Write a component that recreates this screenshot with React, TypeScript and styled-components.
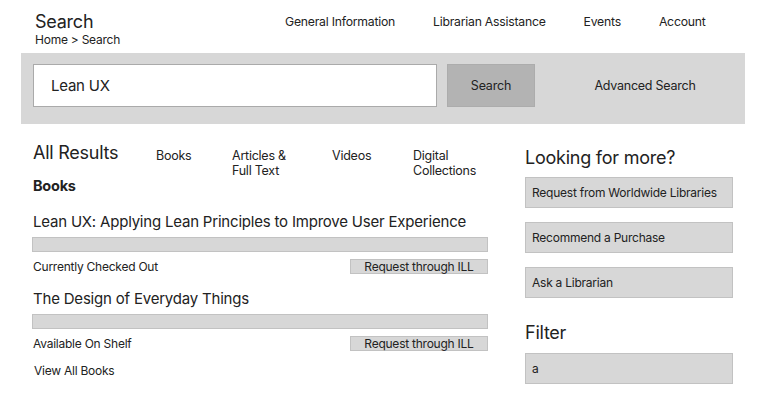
import React from "react";
import styled, { createGlobalStyle } from "styled-components";

const FONT = `Inter, "Liberation Sans", Arial, sans-serif`;

const GlobalStyle = createGlobalStyle`
  body {
    margin: 0;
    background: #ffffff;
    font-family: ${FONT};
    color: #222222;
    letter-spacing: -0.015em;
  }
`;

const NAV_ITEMS = ["General Information", "Librarian Assistance", "Events", "Account"];

const TABS = [
  { label: "Books", width: 76 },
  { label: "Articles &\nFull Text", width: 100 },
  { label: "Videos", width: 81 },
  { label: "Digital\nCollections", width: 75 },
];

const BOOKS = [
  { title: "Lean UX: Applying Lean Principles to Improve User Experience", status: "Currently Checked Out" },
  { title: "The Design of Everyday Things", status: "Available On Shelf" },
];

const HELP_LINKS = ["Request from Worldwide Libraries", "Recommend a Purchase", "Ask a Librarian"];

function App() {
  return (
    <Page>
      <GlobalStyle />
      <Header>
        <TitleBlock>
          <PageTitle>Search</PageTitle>
          <Breadcrumb>Home &gt; Search</Breadcrumb>
        </TitleBlock>
        <Nav>
          {NAV_ITEMS.map((item) => (
            <NavLink key={item}>{item}</NavLink>
          ))}
        </Nav>
      </Header>

      <SearchBand>
        <SearchInput defaultValue="Lean UX" />
        <SearchButton>Search</SearchButton>
        <AdvancedLink>Advanced Search</AdvancedLink>
      </SearchBand>

      <Main>
        <Results>
          <TabsRow>
            <AllResults>All Results</AllResults>
            {TABS.map((tab) => (
              <Tab key={tab.label} $width={tab.width}>
                {tab.label}
              </Tab>
            ))}
          </TabsRow>
          <SectionTitle>Books</SectionTitle>
          {BOOKS.map((book, i) => (
            <BookItem key={book.title} $first={i === 0}>
              <BookTitle>{book.title}</BookTitle>
              <Bar />
              <StatusRow>
                <Status>{book.status}</Status>
                <IllButton>Request through ILL</IllButton>
              </StatusRow>
            </BookItem>
          ))}
          <ViewAll>View All Books</ViewAll>
        </Results>

        <Sidebar>
          <SideHeading $top={23} $bottom={8}>
            Looking for more?
          </SideHeading>
          <LinkList>
            {HELP_LINKS.map((link) => (
              <SideBox key={link}>{link}</SideBox>
            ))}
          </LinkList>
          <SideHeading $top={24} $bottom={9}>
            Filter
          </SideHeading>
          <SideBox>a</SideBox>
        </Sidebar>
      </Main>
    </Page>
  );
}

export default App;

const Page = styled.div`
  width: 768px;
  height: 393px;
  overflow: hidden;
`;

const Header = styled.header`
  display: flex;
  align-items: flex-start;
  padding: 11px 0 0 35px;
  height: 42px;
`;

const TitleBlock = styled.div`
  display: flex;
  flex-direction: column;
  width: 250px;
`;

const PageTitle = styled.div`
  font-size: 18px;
  line-height: 22px;
`;

const Breadcrumb = styled.div`
  font-size: 12px;
  line-height: 14px;
`;

const Nav = styled.nav`
  display: flex;
  gap: 38px;
  padding-top: 3px;
`;

const NavLink = styled.a`
  font-size: 12.25px;
  line-height: 16px;
`;

const SearchBand = styled.div`
  display: flex;
  align-items: flex-start;
  margin-left: 21px;
  width: 724px;
  height: 71px;
  padding: 11px 12px 0;
  box-sizing: border-box;
  background: #d7d7d7;
`;

const SearchInput = styled.input`
  width: 404px;
  height: 43px;
  box-sizing: border-box;
  border: 1px solid #aaaaaa;
  background: #ffffff;
  padding: 0 17px;
  font-family: ${FONT};
  font-size: 15px;
  letter-spacing: -0.015em;
  color: #222222;
  outline: none;
`;

const SearchButton = styled.button`
  width: 88px;
  height: 43px;
  margin-left: 10px;
  border: 1px solid #acacac;
  background: #b3b3b3;
  font-family: ${FONT};
  font-size: 12.5px;
  letter-spacing: -0.015em;
  color: #222222;
`;

const AdvancedLink = styled.a`
  flex: 1;
  height: 43px;
  display: flex;
  align-items: center;
  justify-content: center;
  font-size: 12.5px;
  padding-left: 22px;
`;

const Main = styled.main`
  display: flex;
  gap: 37px;
  padding: 0 0 0 32px;
`;

const Results = styled.section`
  width: 456px;
  flex-shrink: 0;
  display: flex;
  flex-direction: column;
`;

const TabsRow = styled.div`
  display: flex;
  align-items: flex-start;
  padding-top: 19px;
`;

const AllResults = styled.div`
  flex-shrink: 0;
  width: 123px;
  padding-left: 1px;
  font-size: 18px;
  line-height: 20px;
`;

const Tab = styled.div<{ $width: number }>`
  flex-shrink: 0;
  width: ${(p) => p.$width}px;
  font-size: 12.5px;
  line-height: 15px;
  white-space: pre-line;
  padding-top: 5px;
`;

const SectionTitle = styled.div`
  font-size: 14.5px;
  font-weight: 700;
  line-height: 18px;
  margin-top: -1px;
  padding-left: 1px;
`;

const BookItem = styled.div<{ $first: boolean }>`
  display: flex;
  flex-direction: column;
  margin-top: ${(p) => (p.$first ? 18 : 16)}px;
`;

const BookTitle = styled.div`
  font-size: 15px;
  line-height: 18px;
  padding-left: 1px;
  letter-spacing: -0.2px;
`;

const Bar = styled.div`
  height: 15px;
  margin-top: 6px;
  box-sizing: border-box;
  border: 1px solid #c2c2c2;
  background: #d7d7d7;
`;

const StatusRow = styled.div`
  display: flex;
  justify-content: space-between;
  align-items: center;
  margin-top: 7px;
`;

const Status = styled.div`
  font-size: 12px;
  line-height: 14px;
  padding-left: 1px;
`;

const IllButton = styled.div`
  width: 138px;
  height: 15px;
  box-sizing: border-box;
  border: 1px solid #c2c2c2;
  background: #d7d7d7;
  font-size: 12px;
  line-height: 13px;
  text-align: center;
`;

const ViewAll = styled.a`
  font-size: 12px;
  line-height: 14px;
  margin-top: 13px;
  padding-left: 2px;
`;

const Sidebar = styled.aside`
  width: 208px;
  display: flex;
  flex-direction: column;
`;

const SideHeading = styled.div<{ $top: number; $bottom: number }>`
  font-size: 18px;
  line-height: 22px;
  margin-top: ${(p) => p.$top}px;
  margin-bottom: ${(p) => p.$bottom}px;
`;

const LinkList = styled.div`
  display: flex;
  flex-direction: column;
  gap: 14px;
`;

const SideBox = styled.div`
  height: 31px;
  box-sizing: border-box;
  border: 1px solid #c2c2c2;
  background: #d7d7d7;
  display: flex;
  align-items: center;
  padding-left: 6px;
  font-size: 12px;
`;
